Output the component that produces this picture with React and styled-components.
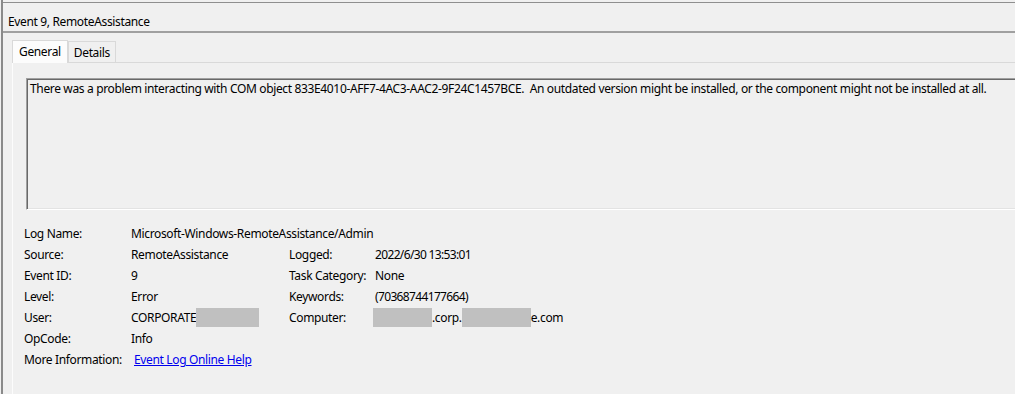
import React from "react";
import styled, { createGlobalStyle } from "styled-components";

const GlobalStyle = createGlobalStyle`
  html, body {
    margin: 0;
    padding: 0;
    background: #f0f0f0;
    overflow: hidden;
  }
  body {
    font-family: "Noto Sans", "Open Sans", sans-serif;
    font-size: 12px;
    letter-spacing: -0.35px;
    color: #000;
  }
`;

const Page = styled.div`
  width: 1015px;
  height: 394px;
  padding: 0 0 0 1px;
  box-sizing: border-box;
  background: #f0f0f0;
  overflow: hidden;
`;

const Window = styled.div`
  height: 100%;
  padding-top: 2px;
  border-left: 2px solid #8a8a8a;
  box-sizing: border-box;
  background: #f0f0f0;
`;

const TopEdge = styled.div`
  height: 1px;
  background: #8f8f8f;
`;

const TitleBar = styled.div`
  height: 30px;
  box-sizing: border-box;
  display: flex;
  align-items: center;
  padding: 8px 0 0 5px;
  border-bottom: 2px solid #a0a0a0;
  white-space: nowrap;
`;

const TabStrip = styled.div`
  display: flex;
  align-items: flex-end;
  height: 29px;
  padding-left: 9px;
`;

const Tab = styled.div`
  box-sizing: border-box;
  height: ${(p) => (p.$active ? "23px" : "21px")};
  padding: ${(p) => (p.$active ? "0 6px 2px" : "0 5px")};
  display: flex;
  align-items: center;
  background: ${(p) => (p.$active ? "#fcfcfc" : "#f0f0f0")};
  border: 1px solid #d9d9d9;
  border-bottom: none;
  margin-bottom: ${(p) => (p.$active ? "-1px" : "0")};
  position: relative;
  z-index: ${(p) => (p.$active ? 1 : 0)};
  white-space: nowrap;
`;

const TabPanel = styled.div`
  margin-left: 9px;
  border-top: 1px solid #d9d9d9;
  border-left: 1px solid #fcfcfc;
  padding-top: 15px;
  height: 400px;
`;

const MessageBox = styled.div`
  margin-left: 13px;
  height: 132px;
  box-sizing: border-box;
  border: 1px solid;
  border-color: #a0a0a0 #ffffff #ffffff #a0a0a0;
  box-shadow: inset 1px 1px 0 #696969, inset -1px -1px 0 #e3e3e3;
  padding: 2px 3px;
  line-height: 16px;
  white-space: nowrap;
  width: 1100px;
`;

const Fields = styled.div`
  margin: 13px 0 0 11px;
  display: grid;
  grid-template-columns: 107px 158px 86px auto;
  grid-auto-rows: 21px;
  align-items: center;
  white-space: nowrap;
`;

const Label = styled.div``;

const Value = styled.div`
  grid-column: ${(p) => p.$span || "auto"};
  display: flex;
  align-items: center;
  letter-spacing: ${(p) => (p.$num ? "-0.65px" : "inherit")};
`;

const Redacted = styled.span`
  display: inline-block;
  width: ${(p) => p.$w}px;
  height: 19px;
  background: #c0c0c0;
  margin-left: ${(p) => p.$ml || 0}px;
`;

const HelpLink = styled.a`
  color: #0000ee;
  text-decoration: underline;
  margin-left: 3px;
  cursor: pointer;
`;

export default function App() {
  return (
    <>
      <GlobalStyle />
      <Page>
        <Window>
          <TopEdge />
          <TitleBar>Event 9, RemoteAssistance</TitleBar>
          <TabStrip>
            <Tab $active>General</Tab>
            <Tab>Details</Tab>
          </TabStrip>
          <TabPanel>
            <MessageBox>
              There was a problem interacting with COM object
              833E4010-AFF7-4AC3-AAC2-9F24C1457BCE.{"\u00a0\u00a0"}An outdated
              version might be installed, or the component might not be
              installed at all.
            </MessageBox>
            <Fields>
              <Label>Log Name:</Label>
              <Value $span="2 / 5">Microsoft-Windows-RemoteAssistance/Admin</Value>

              <Label>Source:</Label>
              <Value>RemoteAssistance</Value>
              <Label>Logged:</Label>
              <Value $num>2022/6/30 13:53:01</Value>

              <Label>Event ID:</Label>
              <Value>9</Value>
              <Label>Task Category:</Label>
              <Value>None</Value>

              <Label>Level:</Label>
              <Value>Error</Value>
              <Label>Keywords:</Label>
              <Value $num>(70368744177664)</Value>

              <Label>User:</Label>
              <Value>
                CORPORATE
                <Redacted $w={63} />
              </Value>
              <Label>Computer:</Label>
              <Value>
                <Redacted $w={59} $ml={-2} />
                .corp.
                <Redacted $w={69} />
                e.com
              </Value>

              <Label>OpCode:</Label>
              <Value $span="2 / 5">Info</Value>

              <Label>More Information:</Label>
              <Value $span="2 / 5">
                <HelpLink>Event Log Online Help</HelpLink>
              </Value>
            </Fields>
          </TabPanel>
        </Window>
      </Page>
    </>
  );
}
